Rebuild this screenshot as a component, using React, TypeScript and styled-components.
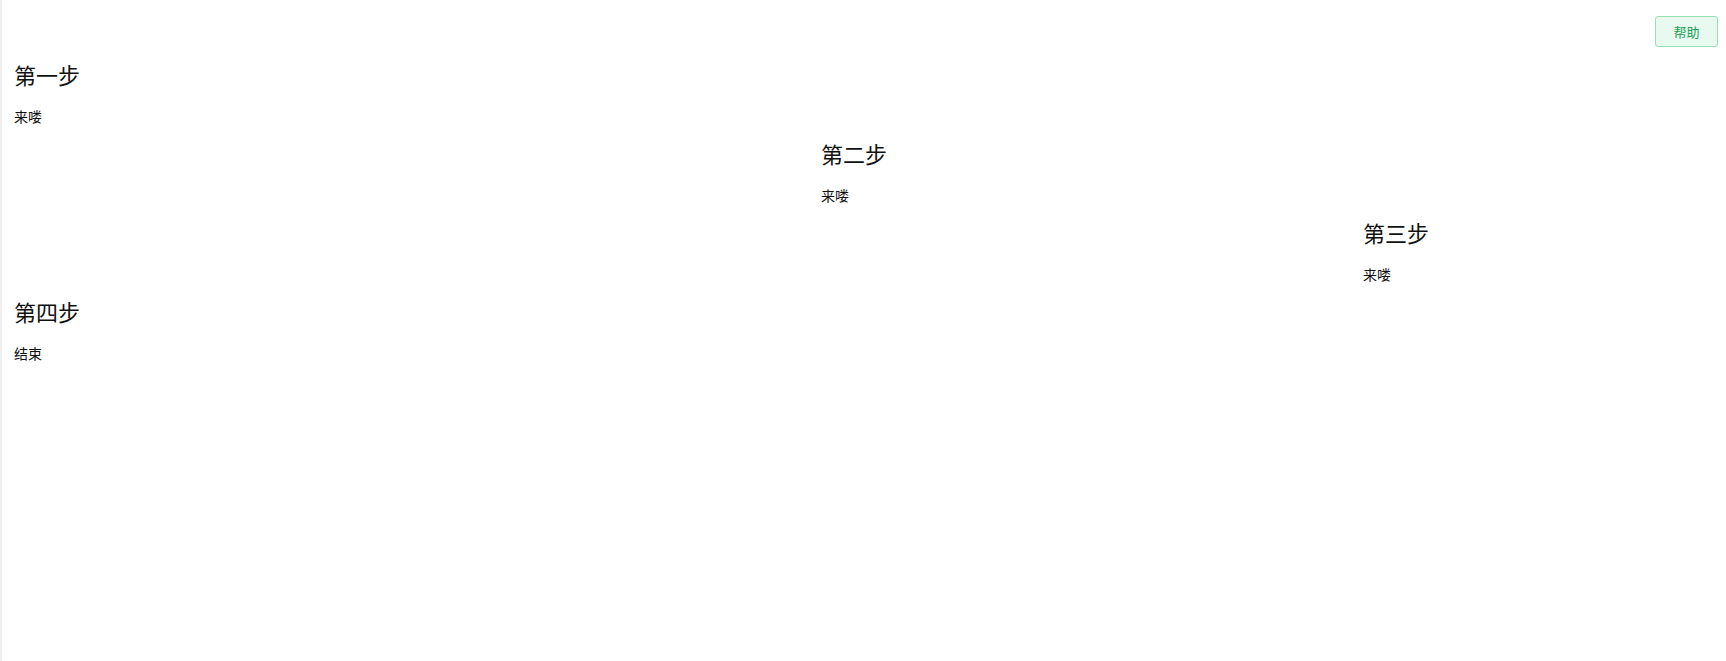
import React from 'react'
import styled, { createGlobalStyle } from 'styled-components'

const GlobalStyle = createGlobalStyle`
  html, body {
    margin: 0;
    padding: 0;
    background: #fff;
  }
  body {
    font-family: "Noto Sans CJK SC", "Noto Sans", sans-serif;
    color: #1f1f1f;
  }
`

interface Step {
  title: string
  desc: string
  offset: number
}

const steps: Step[] = [
  { title: '第一步', desc: '来喽', offset: 0 },
  { title: '第二步', desc: '来喽', offset: 807 },
  { title: '第三步', desc: '来喽', offset: 1349 },
  { title: '第四步', desc: '结束', offset: 0 },
]

const App: React.FC = () => {
  return (
    <>
      <GlobalStyle />
      <StyledPage>
        <StyledToolbar>
          <StyledHelpButton type="button">帮助</StyledHelpButton>
        </StyledToolbar>
        <StyledSteps>
          {steps.map((step, i) => (
            <StyledStep key={i} $offset={step.offset}>
              <StyledTitle>{step.title}</StyledTitle>
              <StyledDesc>{step.desc}</StyledDesc>
            </StyledStep>
          ))}
        </StyledSteps>
      </StyledPage>
    </>
  )
}

const StyledPage = styled.div`
  box-sizing: border-box;
  min-height: 661px;
  border-left: 2px solid #f0f0f0;
  padding: 16px 8px 0 12px;
`

const StyledToolbar = styled.div`
  display: flex;
  justify-content: flex-end;
`

const StyledHelpButton = styled.button`
  box-sizing: border-box;
  display: flex;
  align-items: center;
  justify-content: center;
  width: 63px;
  height: 31px;
  padding: 0;
  border: 1px solid #94e2b3;
  border-radius: 3px;
  background: #e8f9ef;
  color: #18a058;
  font-family: "Noto Sans CJK SC", "Noto Sans", sans-serif;
  font-size: 13px;
  font-weight: 400;
  cursor: pointer;
`

const StyledSteps = styled.div`
  display: flex;
  flex-direction: column;
  margin-top: 12px;
`

const StyledStep = styled.div<{ $offset: number }>`
  display: flex;
  flex-direction: column;
  margin-left: ${props => props.$offset}px;
  height: 79px;
`

const StyledTitle = styled.h2`
  margin: 0;
  font-size: 22px;
  font-weight: 400;
  line-height: 30px;
  color: #111;
`

const StyledDesc = styled.p`
  margin: 17px 0 0;
  font-size: 14px;
  line-height: 20px;
  color: #111;
`

export default App
